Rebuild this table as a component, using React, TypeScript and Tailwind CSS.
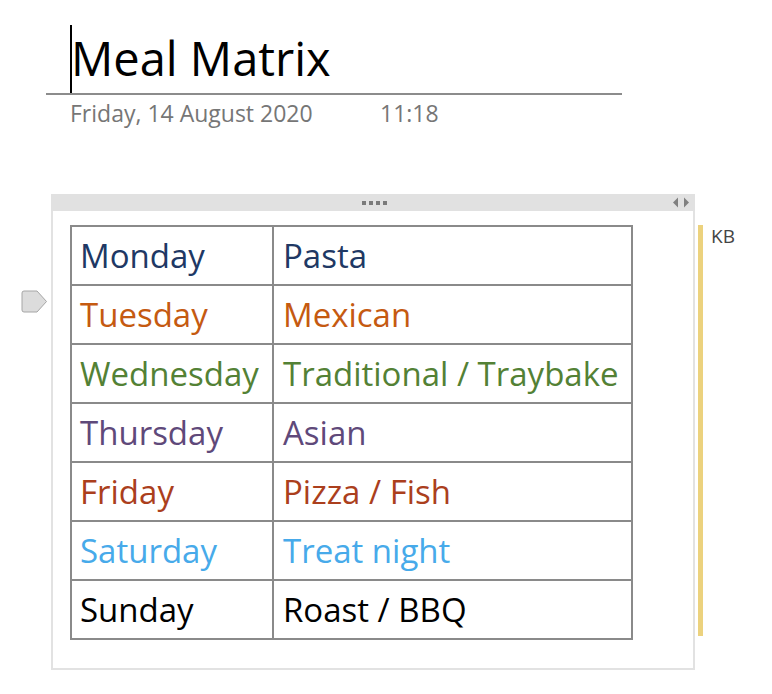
const rows = [
  { day: "Monday", meal: "Pasta", color: "text-[#203864]" },
  { day: "Tuesday", meal: "Mexican", color: "text-[#c55a11]" },
  { day: "Wednesday", meal: "Traditional / Traybake", color: "text-[#538135]" },
  { day: "Thursday", meal: "Asian", color: "text-[#5f497a]" },
  { day: "Friday", meal: "Pizza / Fish", color: "text-[#ab3f1d]" },
  { day: "Saturday", meal: "Treat night", color: "text-[#47aaea]" },
  { day: "Sunday", meal: "Roast / BBQ", color: "text-black" },
];

const App = () => {
  return (
    <div className="w-[772px] h-[694px] bg-white font-['Open_Sans',sans-serif] overflow-hidden">
      <header className="ml-[46px] w-[576px] pt-[25px]">
        <div className="flex items-start border-b-2 border-[#8c8c8c] pl-[24px]">
          <span className="w-[2px] h-[68px] bg-black shrink-0"></span>
          <h1 className="text-[47px] leading-[64px] pt-[1px] text-black -ml-[1px]">Meal Matrix</h1>
        </div>
        <div className="flex pl-[24px] mt-[4px] text-[23px] leading-[29px] text-[#767676]">
          <span className="w-[310px]">Friday, 14 August 2020</span>
          <span>11:18</span>
        </div>
      </header>

      <div className="flex items-start ml-[21px] mt-[66px]">
        <div className="mt-[96px] mr-[3px]">
          <svg width="27" height="23" viewBox="0 0 27 23">
            <path
              d="M3 1 H16 L25.5 11.5 L16 22 H3 Q1 22 1 20 V3 Q1 1 3 1 Z"
              fill="#dcdcdc"
              stroke="#a6a6a6"
              strokeWidth="1"
            />
          </svg>
        </div>

        <div className="w-[644px] h-[476px] border-2 border-t-0 border-[#e2e2e2]">
          <div className="relative h-[17px] bg-[#e1e1e1] -mx-[2px] flex items-center justify-center">
            <div className="flex gap-[3px] pl-[2px]">
              <span className="w-[4px] h-[4px] bg-[#7a7a7a]"></span>
              <span className="w-[4px] h-[4px] bg-[#7a7a7a]"></span>
              <span className="w-[4px] h-[4px] bg-[#7a7a7a]"></span>
              <span className="w-[4px] h-[4px] bg-[#7a7a7a]"></span>
            </div>
            <svg className="absolute right-[5px] top-[3px]" width="18" height="11" viewBox="0 0 18 11">
              <path d="M6 0.5 V10.5 L1 5.5 Z" fill="#808080" />
              <path d="M12 0.5 V10.5 L17 5.5 Z" fill="#808080" />
            </svg>
          </div>

          <div className="pl-[17px] pt-[14px]">
            <table className="border-collapse border-2 border-[#8a8a8a] text-[33px]">
              <tbody>
                {rows.map((r) => (
                  <tr key={r.day} className={r.color}>
                    <td className="w-[202px] h-[59px] p-0 border-2 border-[#8a8a8a] pl-[8px] align-middle whitespace-nowrap leading-[40px]">
                      {r.day}
                    </td>
                    <td className="w-[359px] h-[59px] p-0 border-2 border-[#8a8a8a] pl-[9px] align-middle whitespace-nowrap leading-[40px]">
                      {r.meal}
                    </td>
                  </tr>
                ))}
              </tbody>
            </table>
          </div>
        </div>

        <div className="w-[5px] h-[411px] bg-[#ecd27e] ml-[3px] mt-[31px]"></div>
        <span className="ml-[8px] mt-[31px] text-[19px] leading-[22px] text-[#444]">KB</span>
      </div>
    </div>
  );
};

export default App;
